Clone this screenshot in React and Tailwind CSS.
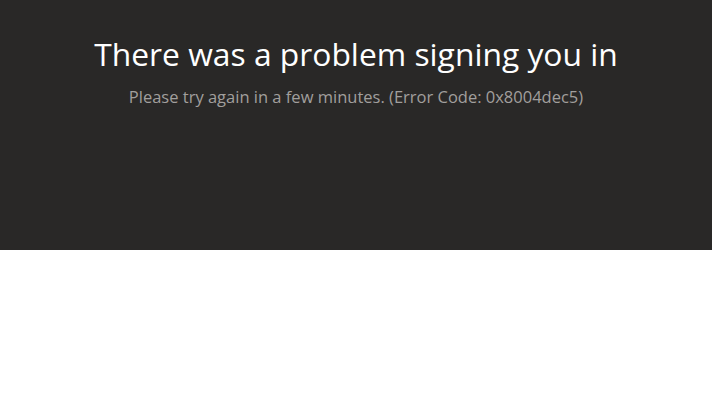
export default function App() {
  return (
    <div className="w-[712px] h-[410px] bg-white" style={{ fontFamily: '"Open Sans", "Noto Sans", sans-serif' }}>
      <div className="h-[250px] bg-[#292827] flex flex-col items-center pt-[33px]">
        <h1 className="text-[31.8px] leading-[42px] text-white font-medium">There was a problem signing you in</h1>
        <p className="mt-[11px] text-[16.5px] leading-[22px] text-[#a19f9d]">Please try again in a few minutes. (Error Code: 0x8004dec5)</p>
      </div>
    </div>
  );
}
